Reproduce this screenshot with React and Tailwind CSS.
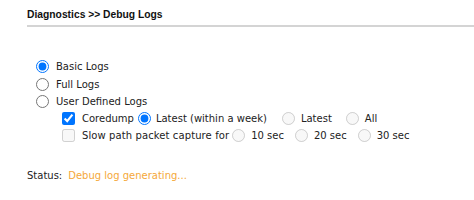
import React from "react";

const R = ({ checked, disabled, name, className = "" }) => (
  <input type="radio" name={name} defaultChecked={checked} disabled={disabled} className={"m-0 h-[13px] w-[13px] shrink-0 " + className} />
);

export default function App() {
  return (
    <div className="w-[474px] h-[200px] bg-white overflow-hidden text-[10px] text-[#222]" style={{ fontFamily: '"DejaVu Sans", Verdana, sans-serif' }}>
      <div className="pl-[27px] pt-[8px]">
        <div className="text-[10.3px] font-bold text-[#111] leading-[13px] pb-[4px] border-b-2 border-[#d4d4d4]" style={{ fontFamily: '"Liberation Sans", Arial, sans-serif' }}>
          Diagnostics &gt;&gt; Debug Logs
        </div>
      </div>
      <div className="pl-[36px] pt-[30px] flex flex-col">
        <label className="flex items-center h-[18px]">
          <R name="m" checked />
          <span className="ml-[7px]">Basic Logs</span>
        </label>
        <label className="flex items-center h-[18px]">
          <R name="m" />
          <span className="ml-[7px]">Full Logs</span>
        </label>
        <label className="flex items-center h-[17px]">
          <R name="m" />
          <span className="ml-[7px]">User Defined Logs</span>
        </label>
        <div className="flex items-center h-[17px] pl-[26px]">
          <input type="checkbox" defaultChecked className="m-0 h-[13px] w-[13px]" />
          <span className="ml-[7px]">Coredump</span>
          <R name="c" checked className="ml-[4px]" />
          <span className="ml-[5px]">Latest (within a week)</span>
          <R name="c" disabled className="ml-[15px]" />
          <span className="ml-[6px]">Latest</span>
          <R name="c" disabled className="ml-[14px]" />
          <span className="ml-[6px]">All</span>
        </div>
        <div className="flex items-center h-[17px] pl-[26px]">
          <input type="checkbox" disabled className="m-0 h-[13px] w-[13px]" />
          <span className="ml-[7px] tracking-[0.1px]">Slow path packet capture for</span>
          <R name="s" disabled className="ml-[3px]" />
          <span className="ml-[6px]">10 sec</span>
          <R name="s" disabled className="ml-[11px]" />
          <span className="ml-[6px]">20 sec</span>
          <R name="s" disabled className="ml-[11px]" />
          <span className="ml-[6px]">30 sec</span>
        </div>
      </div>
      <div className="pl-[27px] pt-[24px]">
        Status:<span className="ml-[6px] text-[#f5a83a]">Debug log generating...</span>
      </div>
    </div>
  );
}
